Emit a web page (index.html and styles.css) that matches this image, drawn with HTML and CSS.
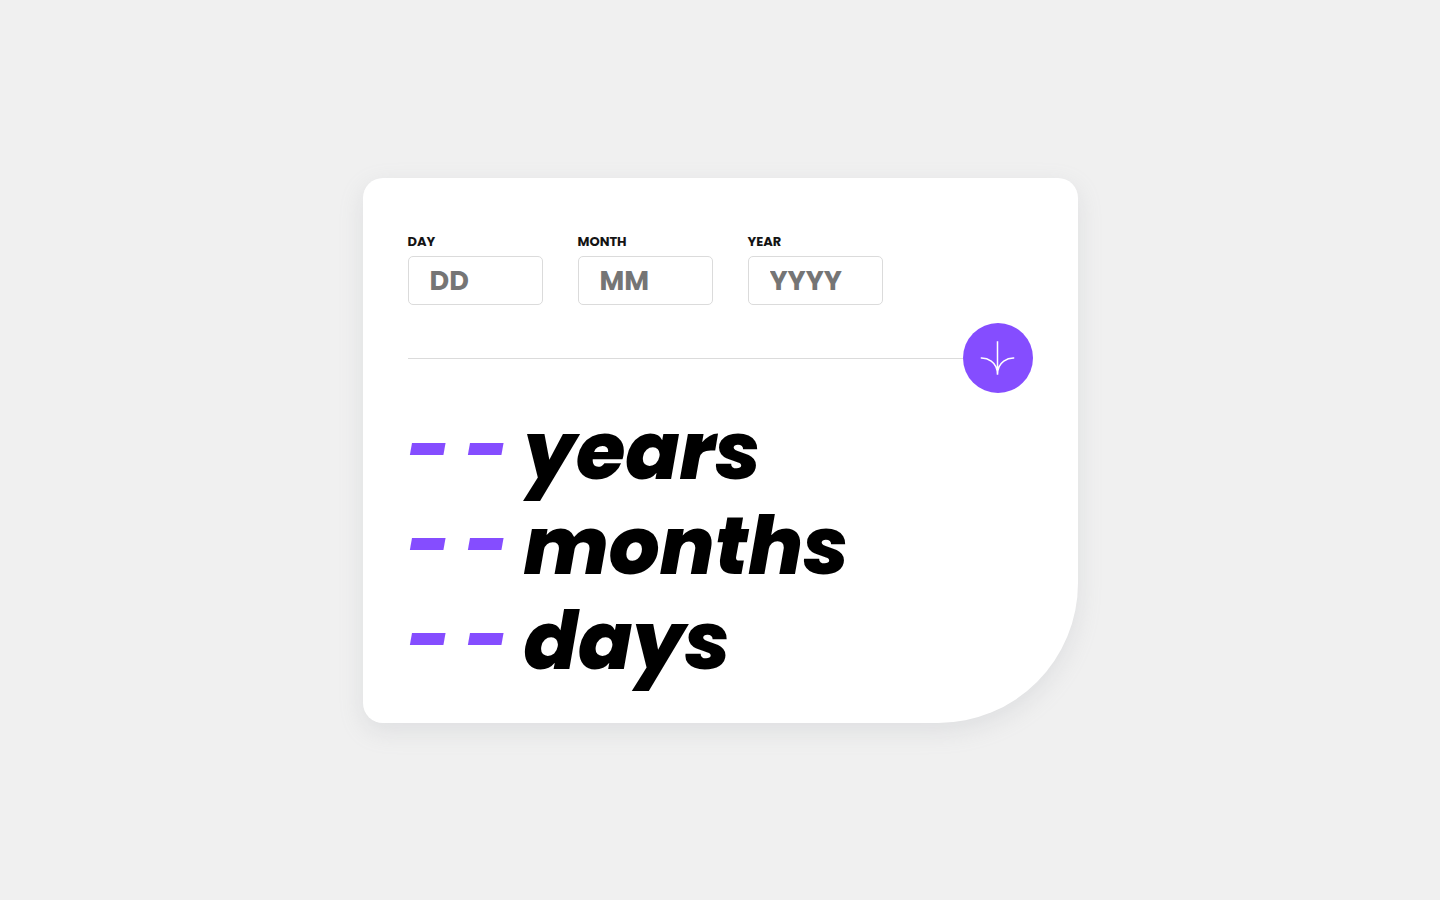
FILE: index.html
```html
<!DOCTYPE html>
<html lang="en">
<head>
<meta charset="utf-8">
<meta name="viewport" content="width=device-width, initial-scale=1">
<title>Age calculator</title>
<link rel="stylesheet" href="styles.css">
</head>
<body>
<main class="card">
  <form class="form">
    <div class="fields">
      <div class="field"><label for="day">DAY</label><input id="day" type="text" placeholder="DD"></div>
      <div class="field"><label for="month">MONTH</label><input id="month" type="text" placeholder="MM"></div>
      <div class="field"><label for="year">YEAR</label><input id="year" type="text" placeholder="YYYY"></div>
    </div>
    <div class="divider">
      <span class="line"></span>
      <button class="submit" type="button" aria-label="Calculate age">
        <svg class="arrow" viewBox="0 0 46 44" aria-hidden="true"><path d="M1 22.019C8.333 21.686 23 25.616 23 44M23 44V0M45 22.019C37.667 21.686 23 25.616 23 44"/></svg>
      </button>
    </div>
  </form>
  <section class="results">
    <p class="result"><span class="value"><span>-</span><span>-</span></span><span>years</span></p>
    <p class="result"><span class="value"><span>-</span><span>-</span></span><span>months</span></p>
    <p class="result"><span class="value"><span>-</span><span>-</span></span><span>days</span></p>
  </section>
</main>
</body>
</html>
```
FILE: styles.css
```css
* { box-sizing: border-box; }

body {
  margin: 0;
  min-height: 100vh;
  display: flex;
  align-items: center;
  justify-content: center;
  background: #f0f0f0;
  font-family: Poppins, Inter, "Open Sans", sans-serif;
}

.card {
  width: 100%;
  max-width: 715px;
  padding: 55px 45px 34px;
  background: #fff;
  border-radius: 20px 20px 140px 20px;
  box-shadow: 0 8px 24px rgba(149, 157, 165, 0.2);
}

.fields {
  display: flex;
  gap: 35px;
}

.field {
  display: flex;
  flex-direction: column;
  gap: 5px;
}

.field label {
  font-size: 13px;
  line-height: 18px;
  font-weight: 700;
  color: #141414;
}

.field input {
  width: 135px;
  height: 49px;
  padding: 2px 20px 0 21px;
  border: 1px solid #dbdbdb;
  border-radius: 5px;
  background: #fff;
  font: 700 27px/42px Poppins, Inter, "Open Sans", sans-serif;
  color: #141414;
}

.field input::placeholder {
  color: #757575;
  opacity: 1;
}

.divider {
  display: flex;
  align-items: center;
  margin-top: 18px;
}

.line {
  flex: 1;
  height: 2px;
  border-bottom: 1px solid #dbdbdb;
}

.submit {
  display: flex;
  align-items: center;
  justify-content: center;
  width: 70px;
  height: 70px;
  padding: 0;
  border: 0;
  border-radius: 50%;
  background: #854dff;
}

.arrow {
  width: 35px;
  height: 34px;
  fill: none;
  stroke: #fff;
  stroke-width: 2;
}

.results {
  margin-top: 11px;
}

.result {
  display: flex;
  align-items: flex-start;
  margin: 0;
  font-size: 80px;
  line-height: 95px;
  font-weight: 800;
  font-style: italic;
  color: #000;
}

.value {
  display: flex;
  font-size: 74px;
  line-height: 90px;
  color: #854dff;
}

.value span {
  width: 58px;
}
```
